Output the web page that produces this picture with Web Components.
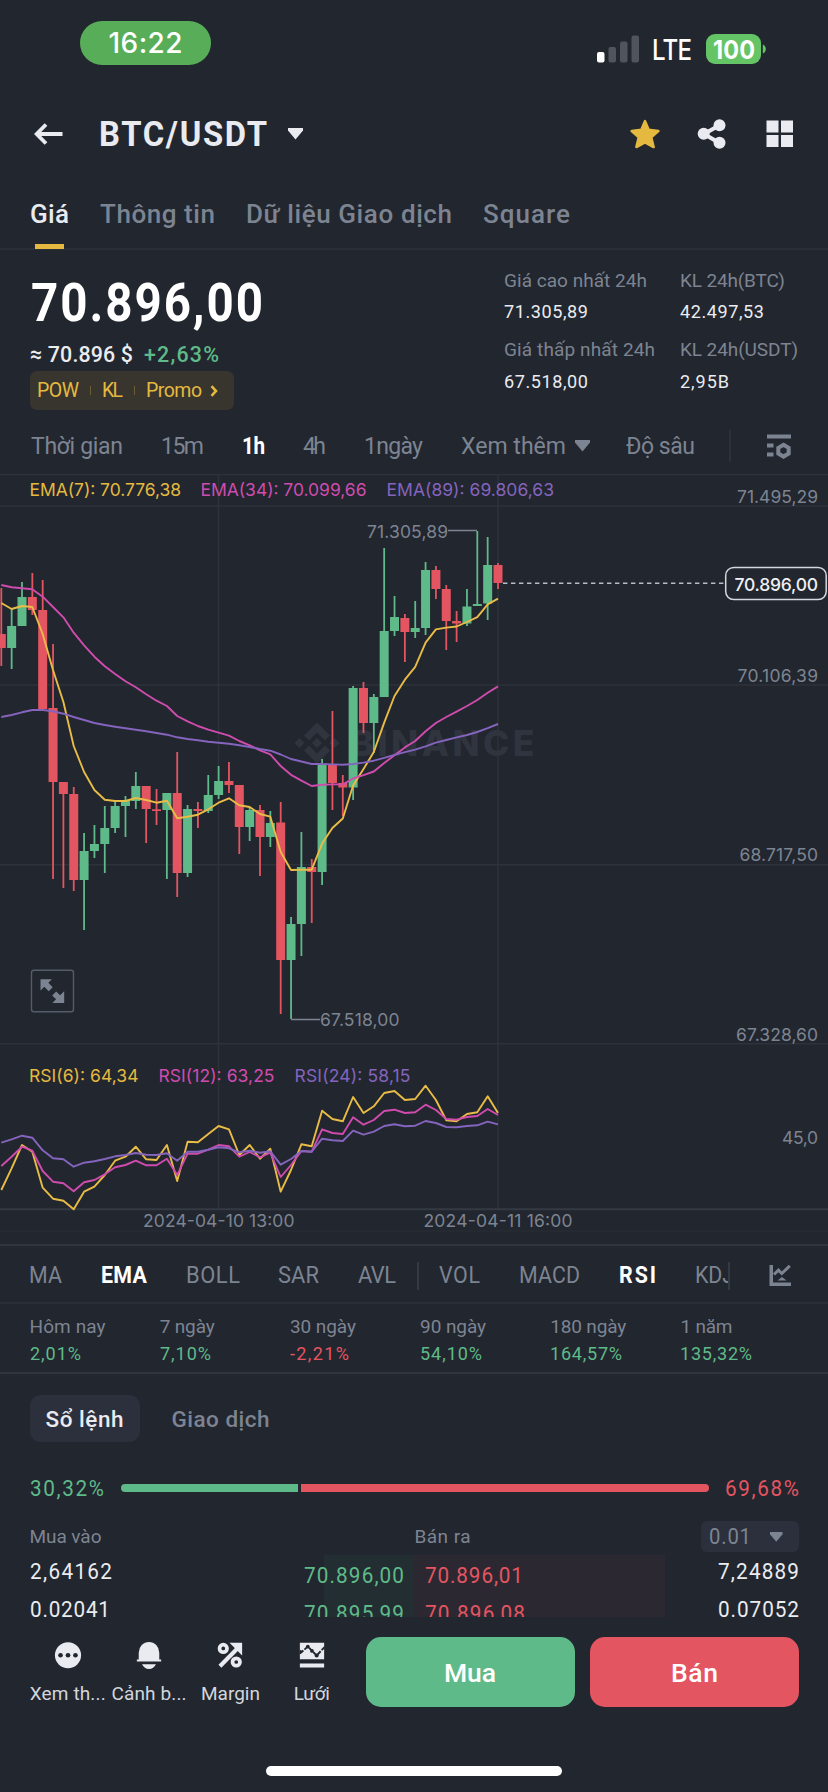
<!DOCTYPE html>
<html lang="vi">
<head>
<meta charset="utf-8">
<title>BTC/USDT</title>
<style>
    body {
        margin: 0;
        background: #22262f;
        color: #eaecef;
        font-family: Roboto, "Noto Sans", sans-serif;
        --muted: #7d8491;
        --green: #5fba89;
        --red: #e35561;
        --yellow: #e5b93f;
        --chip: #2b303c;
        --icon: #e9ebf0;
    }
</style>
</head>
<body>
<trade-page></trade-page>
<script>
const CARET = '<svg width="15" height="12" viewBox="0 0 15 12"><path d="M0 0h15v2.6L7.5 11.6 0 2.6z" fill="currentColor"/></svg>';

class TradePage extends HTMLElement {
    constructor() {
        super();
        this.attachShadow({ mode: 'open' });
        this.shadowRoot.innerHTML = `
            <style>
                :host { display: flex; flex-direction: column; width: 828px; height: 1792px; overflow: hidden; }
            </style>
            <status-bar></status-bar>
            <pair-header></pair-header>
            <page-tabs></page-tabs>
            <price-summary></price-summary>
            <interval-bar></interval-bar>
            <price-chart></price-chart>
            <indicator-bar></indicator-bar>
            <period-returns></period-returns>
            <order-book></order-book>
            <action-bar></action-bar>
        `;
    }
}

class StatusBar extends HTMLElement {
    constructor() {
        super();
        this.attachShadow({ mode: 'open' });
        this.shadowRoot.innerHTML = `
            <style>
                :host {
                    display: flex;
                    justify-content: space-between;
                    align-items: flex-start;
                    box-sizing: border-box;
                    height: 88px;
                    padding: 21px 62px 0 80px;
                    font-family: Inter, sans-serif;
                    color: #fff;
                }
                .clock {
                    display: flex;
                    align-items: center;
                    justify-content: center;
                    width: 131px;
                    height: 44px;
                    border-radius: 22px;
                    background: #58ae58;
                    font-size: 28px;
                    font-weight: 500;
                }
                .right { display: flex; align-items: center; margin-top: 12px; height: 32px; }
                .lte { font-size: 28px; font-weight: 500; margin: 2px 14px 0 13px; }
                .battery {
                    display: flex;
                    align-items: center;
                    justify-content: center;
                    width: 55px;
                    height: 30px;
                    border-radius: 9px;
                    background: #65c466;
                    font-size: 26px;
                    font-weight: 700;
                }
            </style>
            <div class="clock"><fit-text w="74">16:22</fit-text></div>
            <div class="right">
                <svg width="42" height="28" viewBox="0 0 42 28">
                    <rect x="0" y="17" width="7.5" height="10.5" rx="2" fill="#fff"/>
                    <rect x="11.5" y="12" width="7.5" height="15.5" rx="2" fill="#50545c"/>
                    <rect x="23" y="6.5" width="7.5" height="21" rx="2" fill="#50545c"/>
                    <rect x="34.5" y="0.5" width="7.5" height="27" rx="2" fill="#50545c"/>
                </svg>
                <fit-text class="lte" w="40" scale="0.86">LTE</fit-text>
                <div class="battery"><fit-text w="42" scale="0.9">100</fit-text></div>
                <svg width="5" height="10" viewBox="0 0 5 10"><path d="M1.800.500q3 1.500 3 4.500t-3 4.500z" fill="#65c466"/></svg>
            </div>
        `;
    }
}

class PairHeader extends HTMLElement {
    constructor() {
        super();
        this.attachShadow({ mode: 'open' });
        this.shadowRoot.innerHTML = `
            <style>
                :host {
                    display: flex;
                    align-items: center;
                    height: 92px;
                    padding: 0 34px;
                    color: var(--icon);
                }
                .pair { font-size: 34.5px; font-weight: 700; margin: 0 21px 0 36px; }
                .tools { display: flex; align-items: center; gap: 37px; margin-left: auto; }
                svg { display: block; }
            </style>
            <svg width="29" height="22" viewBox="0 0 29 22" fill="none" stroke="currentColor" stroke-width="3.8">
                <path d="M28.500 11H3M12 1.500 2.700 11l9.300 9.500"/>
            </svg>
            <fit-text class="pair" w="168" scale="0.95">BTC/USDT</fit-text>
            ${CARET}
            <div class="tools">
                <svg width="30" height="30" viewBox="0 0 30 30">
                    <path d="M15 2.200 18.600 10.800 28.300 12 21.200 18.200 23.600 28 15 23.400 6.400 28 8.800 18.200 1.700 12 11.400 10.800z" fill="#e5b93f" stroke="#e5b93f" stroke-width="2.6" stroke-linejoin="round"/>
                </svg>
                <svg width="29" height="30" viewBox="0 0 29 30" fill="currentColor">
                    <path d="M7 15 22.500 6.300M7 15l15.500 9" stroke="currentColor" stroke-width="4"/>
                    <circle cx="6.700" cy="14.800" r="6"/><circle cx="22.500" cy="6.300" r="6"/><circle cx="22.500" cy="23.800" r="6"/>
                </svg>
                <svg width="28" height="28" viewBox="0 0 28 28" fill="currentColor" style="margin-left:3px">
                    <path d="M.500.500h12v12H.500zM15 .500h12v12H15zM.500 15h12v12H.500zM15 15h12v12H15z"/>
                </svg>
            </div>
        `;
    }
}

class PageTabs extends HTMLElement {
    constructor() {
        super();
        this.attachShadow({ mode: 'open' });
        this.shadowRoot.innerHTML = `
            <style>
                :host {
                    display: flex;
                    gap: 31px;
                    box-sizing: border-box;
                    height: 70px;
                    padding-left: 30px;
                    border-bottom: 2px solid #292e37;
                    color: var(--muted);
                    font-size: 26px;
                    font-weight: 500;
                }
                .tab { display: flex; flex-direction: column; align-items: center; line-height: 68px; height: 69px; }
                .active { color: var(--icon); }
                .active::after { content: ''; width: 29px; height: 5px; margin-top: -4px; background: var(--yellow); }
            </style>
            <div class="tab active"><fit-text w="39">Giá</fit-text></div>
            <div class="tab"><fit-text w="115">Thông tin</fit-text></div>
            <div class="tab"><fit-text w="206">Dữ liệu Giao dịch</fit-text></div>
            <div class="tab"><fit-text w="87">Square</fit-text></div>
        `;
    }
}

class PriceSummary extends HTMLElement {
    constructor() {
        super();
        this.attachShadow({ mode: 'open' });
        this.shadowRoot.innerHTML = `
            <style>
                :host {
                    display: flex;
                    justify-content: space-between;
                    box-sizing: border-box;
                    height: 168px;
                    padding: 14px 29px 0 30px;
                }
                .price { font-size: 54px; font-weight: 700; line-height: 78px; margin-left: 1px; color: #fff; }
                .change { display: flex; gap: 11px; font-size: 22.5px; font-weight: 500; line-height: 24px; }
                .up { color: var(--green); }
                .tags {
                    display: inline-flex;
                    align-items: center;
                    box-sizing: border-box;
                    width: 204px;
                    height: 39px;
                    margin-top: 5px;
                    padding-left: 7px;
                    border-radius: 7px;
                    background: #37352e;
                    color: var(--yellow);
                    font-size: 19.5px;
                }
                .tags i { width: 1px; height: 9px; margin: 0 11px; background: #6d5d35; }
                .stats { display: grid; grid-template-columns: 176px 119px; grid-template-rows: 31px 38px 32px 31px; font-size: 19px; }
                .stats > * { line-height: 33px; }
                .label { color: var(--muted); }
            </style>
            <div>
                <fit-text class="price" w="232" scale="0.88">70.896,00</fit-text>
                <div class="change"><fit-text w="103" scale="0.95">≈ 70.896 $</fit-text><fit-text class="up" w="75" scale="0.95">+2,63%</fit-text></div>
                <div class="tags">
                    <fit-text w="42">POW</fit-text><i></i>
                    <fit-text w="21">KL</fit-text><i></i>
                    <fit-text w="56">Promo</fit-text>
                    <svg width="8" height="12" viewBox="0 0 8 12" style="margin-left:8px"><path d="M1.500 1.200 6 6l-4.500 4.800" fill="none" stroke="currentColor" stroke-width="2.6"/></svg>
                </div>
            </div>
            <div class="stats">
                <fit-text class="label" w="143">Giá cao nhất 24h</fit-text><fit-text class="label" w="105">KL 24h(BTC)</fit-text>
                <fit-text w="84" scale="0.95">71.305,89</fit-text><fit-text w="84" scale="0.95">42.497,53</fit-text>
                <fit-text class="label" w="151">Giá thấp nhất 24h</fit-text><fit-text class="label" w="118">KL 24h(USDT)</fit-text>
                <fit-text w="84" scale="0.95">67.518,00</fit-text><fit-text w="49" scale="0.95">2,95B</fit-text>
            </div>
        `;
    }
}

class IntervalBar extends HTMLElement {
    constructor() {
        super();
        this.attachShadow({ mode: 'open' });
        this.shadowRoot.innerHTML = `
            <style>
                :host {
                    display: flex;
                    align-items: center;
                    gap: 38px;
                    height: 56px;
                    padding-left: 31px;
                    color: var(--muted);
                    font-size: 23px;
                }
                .active { color: #fff; font-weight: 700; }
                .more { display: flex; align-items: center; gap: 9px; margin-right: -2px; }
                i { width: 2px; height: 32px; margin: 0 -2px 0 -4px; background: #2b3039; }
            </style>
            <fit-text w="92">Thời gian</fit-text>
            <fit-text w="43">15m</fit-text>
            <fit-text class="active" w="23" scale="0.9">1h</fit-text>
            <fit-text w="23">4h</fit-text>
            <fit-text w="59">1ngày</fit-text>
            <span class="more"><fit-text w="105">Xem thêm</fit-text>${CARET}</span>
            <fit-text w="69">Độ sâu</fit-text>
            <i></i>
            <svg width="25" height="25" viewBox="0 0 25 25" fill="currentColor">
                <path d="M0 .500h24v4H0zM0 9.500h6.500v4H0zM0 18.500h6.500v4H0z"/>
                <path d="M16.500 10.800l5.200 3v5.800l-5.200 3-5.200-3v-5.800z" fill="none" stroke="currentColor" stroke-width="4"/>
            </svg>
        `;
    }
}

// [high, body top, body bottom, low, rising] in chart pixels
const CANDLES = [
    [588, 634, 648, 666, 0], [608, 626, 648, 669, 1], [582, 597, 626, 626, 1], [573, 597, 610, 615, 0],
    [580, 610, 709, 709, 0], [644, 708, 782, 879, 0], [782, 782, 794, 888, 0], [787, 794, 880, 891, 0],
    [833, 851, 880, 930, 1], [825, 844, 851, 858, 1], [806, 828, 844, 873, 1], [801, 806, 828, 833, 1],
    [796, 801, 806, 837, 1], [772, 786, 801, 809, 1], [786, 786, 809, 843, 0], [789, 809.3, 811, 825, 0],
    [793, 793, 810, 879, 1], [752, 793, 873, 897, 0], [805, 809, 873, 877, 1], [802, 809, 811, 828, 0],
    [775, 795, 811, 813, 1], [766, 781, 795, 799, 1], [762, 781, 785, 793, 0], [785, 785, 827, 854, 0],
    [807, 810, 827, 841, 1], [805, 810, 837, 876, 0], [811, 823, 837, 847, 1], [802, 822.5, 960, 1014, 0],
    [917, 924, 960, 1019, 1], [832, 867, 924, 956, 1], [859, 867, 872, 923, 0], [759, 765, 872, 885, 1],
    [711, 765, 783, 810, 0], [775, 783, 787.5, 816, 0], [686, 688, 787.5, 800, 1], [682, 688, 723, 733, 0],
    [694, 697, 723, 753, 1], [548, 631, 697, 697, 1], [596, 617, 631, 636, 1], [614, 618, 632, 662, 0],
    [601, 628, 632, 638, 1], [562, 570, 628, 635, 1], [566, 570, 589, 599, 0], [585, 589, 621, 650, 0],
    [611, 621, 623.5, 642, 0], [589, 606.5, 623.5, 626, 1], [531, 604, 606, 606, 1], [537, 565, 603.5, 620, 1],
    [563, 565, 583, 589, 0]
];

const LINES = [
    ['#e9bc46', [603, 609, 606, 607, 634, 670, 702, 746, 772, 790, 799.7, 801, 801, 798, 800, 802.7, 800.7, 818.3, 816.7, 814.7, 809.3, 802.7, 798.3, 805.3, 807, 814, 816.7, 852, 870, 869.7, 869.7, 843.6, 828, 818.5, 785.5, 769, 752, 722.6, 696, 679.7, 666.8, 642.7, 629.4, 627.6, 626.5, 622, 617.2, 604.3, 598.7]],
    ['#cf4cae', [585, 587.3, 588.3, 589.3, 596.7, 607, 617.3, 632.7, 645.3, 656.7, 666.3, 674, 681.3, 687.3, 694.3, 700.7, 706, 716, 721.3, 726, 729.7, 732.7, 735.7, 741, 745.3, 750.3, 754.3, 766, 774.8, 780.7, 786, 784.8, 784.4, 784.4, 778.5, 775.2, 771.5, 763, 755.2, 747.4, 741, 731.2, 723, 717, 711.6, 706, 700, 692.7, 686.4]],
    ['#8464bd', [717, 715, 712.3, 710, 710, 711.3, 713.7, 717, 720, 723, 725, 726.7, 728.3, 729.7, 731.3, 733, 734.7, 737.3, 739, 740.3, 741.7, 742.7, 743.7, 745.3, 747, 749, 750.7, 754.5, 759, 761.5, 764, 764, 764.4, 764.8, 764, 762.6, 760.7, 757.8, 754.8, 752.2, 749.7, 746.3, 742.6, 740, 737.4, 735, 732, 728.2, 724]],
    ['#e9bc46', [1190, 1168.3, 1145, 1151.7, 1187.7, 1198.7, 1200.7, 1209.3, 1191.7, 1186.7, 1175, 1160.7, 1156.7, 1146.7, 1159.3, 1160, 1145, 1181, 1141.7, 1142.3, 1134, 1126, 1129.3, 1155, 1145, 1158.7, 1148.7, 1191.7, 1170, 1144.3, 1146.3, 1110.7, 1119, 1121.3, 1097, 1113, 1106.3, 1093, 1091, 1100, 1099, 1085.7, 1100, 1120.3, 1121.3, 1114, 1112.3, 1096.3, 1113]],
    ['#cf4cae', [1166, 1156.7, 1146.7, 1150.7, 1171, 1181.7, 1183.3, 1191.3, 1182.3, 1180, 1174.3, 1167.3, 1165, 1160.7, 1165.3, 1165.3, 1158.7, 1175, 1153.7, 1153.7, 1149.7, 1145, 1146.3, 1156.7, 1152, 1157.3, 1152.7, 1177, 1165, 1151, 1151.7, 1129.3, 1133, 1134, 1117.3, 1124.7, 1120, 1111, 1109.7, 1113, 1112.3, 1104.7, 1110, 1119, 1119.7, 1117, 1116, 1109, 1115]],
    ['#8464bd', [1142.7, 1139.3, 1135.7, 1137.7, 1150.3, 1158.3, 1159.3, 1166.7, 1162.7, 1161.3, 1159, 1156.3, 1155, 1153, 1154.7, 1155, 1153.3, 1160.7, 1151.7, 1151.7, 1149.7, 1147.3, 1148.3, 1152.3, 1150.7, 1152.7, 1151.3, 1164.7, 1159, 1151, 1151.7, 1138.7, 1140.3, 1141, 1130.7, 1134.7, 1131.7, 1126, 1124.3, 1126.3, 1125.7, 1121, 1123, 1127, 1127.3, 1126, 1125.3, 1121.7, 1124.3]]
];

// [text, x, baseline, width, fill, weight]
const CHART_TEXTS = [
    ['EMA(7): 70.776,38', 29.5, 495.5, 151.5, '#e5b93f'],
    ['EMA(34): 70.099,66', 200.5, 495.5, 166, '#cf4cae'],
    ['EMA(89): 69.806,63', 386.5, 495.5, 167.5, '#8464bd'],
    ['RSI(6): 64,34', 29, 1082, 109.5, '#e5b93f'],
    ['RSI(12): 63,25', 158.5, 1082, 116, '#cf4cae'],
    ['RSI(24): 58,15', 294.5, 1082, 116, '#8464bd'],
    ['71.495,29', 737, 503, 81, '#7d8491'],
    ['70.106,39', 737.5, 682, 80.5, '#7d8491'],
    ['68.717,50', 739.5, 861, 78.5, '#7d8491'],
    ['67.328,60', 736, 1040.5, 82, '#7d8491'],
    ['45,0', 782, 1143.5, 36, '#7d8491'],
    ['71.305,89', 367, 537.5, 81, '#7d8491'],
    ['67.518,00', 320, 1026, 79.5, '#7d8491'],
    ['2024-04-10 13:00', 143, 1227, 151.5, '#7d8491'],
    ['2024-04-11 16:00', 423.5, 1227, 149, '#7d8491'],
    ['70.896,00', 734.5, 590.5, 83.5, '#eef0f4', 500]
];

class PriceChart extends HTMLElement {
    constructor() {
        super();
        this.attachShadow({ mode: 'open' });
        const x = i => 1.3 + i * 10.348;
        const candles = CANDLES.map(([h, t, b, l, up], i) => {
            const c = up ? '#5fba89' : '#e35561';
            return `<rect x="${x(i) - 0.9}" y="${h}" width="1.8" height="${l - h}" fill="${c}"/>
                <rect x="${x(i) - 4.5}" y="${t}" width="9" height="${b - t}" fill="${c}"/>`;
        }).join('');
        const lines = LINES.map(([c, ys]) =>
            `<polyline points="${ys.map((y, i) => x(i).toFixed(1) + ',' + y).join(' ')}" fill="none" stroke="${c}" stroke-width="1.9" stroke-linejoin="round"/>`
        ).join('');
        const texts = CHART_TEXTS.map(([s, tx, ty, w, c, weight]) =>
            `<text x="${tx}" y="${ty}" textLength="${w}" fill="${c}" font-weight="${weight || 400}">${s}</text>`
        ).join('');
        this.shadowRoot.innerHTML = `
            <style>
                :host { display: block; height: 770px; }
                svg { display: block; font-family: Inter, sans-serif; font-size: 17.5px; }
            </style>
            <svg width="828" height="770" viewBox="0 474 828 770">
                <path d="M0 474.500H828M0 506H828M0 685H828M0 864.700H828M0 1043.800H828M218.500 474V1209M498 474V1209" stroke="#2d323b" stroke-width="1.5"/>
                <path d="M0 1209.300H828" stroke="#343a43" stroke-width="2"/>
                <path d="M0 1231H828" stroke="#282c35"/>
                <g fill="#2f343e">
                    <path d="M304 735.500 317 722.500l13 13-5 5-8-8-8 8zM304 750.500l5-5 8 8 8-8 5 5-13 13zM312 743l5-5 5 5-5 5zM294.500 743l5-5 5 5-5 5zM329.500 743l5-5 5 5-5 5z"/>
                    <text x="350.5" y="755.5" textLength="184" font-size="35.5" font-weight="800">BINANCE</text>
                </g>
                ${candles}
                ${lines}
                <path d="M448 530.500h29M291 1019.500h29" stroke="#7d8491" stroke-width="1.4"/>
                <path d="M503 583.300H724" stroke="#b9bdc5" stroke-width="1.5" stroke-dasharray="4.4 3.6"/>
                <rect x="725.7" y="567.5" width="100.5" height="32" rx="8" fill="#22262f" stroke="#d5d8de" stroke-width="1.5"/>
                ${texts}
                <rect x="31.5" y="970.3" width="42" height="41.5" rx="2.5" fill="none" stroke="#555c69" stroke-width="1.4"/>
                <path d="M40.500 979.200h11.400l-3.600 3.600 4.400 4.400-4 4-4.400-4.400-3.800 3.800zM64.200 1003h-11.800l3.700-3.700-3.900-3.900 4-4 3.900 3.900 4.100-4.100z" fill="#7d8491"/>
            </svg>
        `;
    }
}

class IndicatorBar extends HTMLElement {
    constructor() {
        super();
        this.attachShadow({ mode: 'open' });
        this.shadowRoot.innerHTML = `
            <style>
                :host {
                    display: flex;
                    align-items: center;
                    box-sizing: border-box;
                    height: 60px;
                    padding: 3px 36px 0 29px;
                    border-top: 2px solid #2f343d;
                    border-bottom: 2px solid #292e37;
                    color: var(--muted);
                    font-size: 23px;
                }
                .group { display: flex; gap: 38.8px; }
                .sub { width: 289px; overflow: hidden; gap: 39px; }
                .sub > * { flex: none; }
                .active { color: #fff; font-weight: 700; }
                i { width: 2px; height: 28px; background: #343a44; }
                i.mid { margin: 0 20px 0 21px; }
                svg { margin-left: auto; }
            </style>
            <div class="group">
                <fit-text w="33" scale="0.93">MA</fit-text>
                <fit-text class="active" w="46" scale="0.93">EMA</fit-text>
                <fit-text w="54" scale="0.95">BOLL</fit-text>
                <fit-text w="41" scale="0.95">SAR</fit-text>
                <fit-text w="38" scale="0.95">AVL</fit-text>
            </div>
            <i class="mid"></i>
            <div class="group sub">
                <fit-text w="41" scale="0.93">VOL</fit-text>
                <fit-text w="61" scale="0.93">MACD</fit-text>
                <fit-text class="active" w="37" scale="0.93">RSI</fit-text>
                <fit-text w="39" scale="0.93">KDJ</fit-text>
            </div>
            <i></i>
            <svg width="23" height="22" viewBox="0 0 23 22" fill="currentColor">
                <path d="M.500 0h3.500v17.500H22V21H.500z"/>
                <path d="M5 9.500 9.500 5.200l3.300 3.300L20.800.800" fill="none" stroke="currentColor" stroke-width="3"/>
                <path d="M8.500 15.500l4.500-3.600 4.500 3.600z"/>
            </svg>
        `;
    }
}

class PeriodReturns extends HTMLElement {
    constructor() {
        super();
        this.attachShadow({ mode: 'open' });
        this.shadowRoot.innerHTML = `
            <style>
                :host {
                    display: grid;
                    grid-template-columns: repeat(6, 130.2px);
                    box-sizing: border-box;
                    height: 70px;
                    padding: 9px 0 0 29.5px;
                    border-bottom: 2px solid #2f343d;
                    font-size: 19px;
                    line-height: 27px;
                }
                .col { display: flex; flex-direction: column; }
                .label { color: var(--muted); }
                .up { color: var(--green); }
                .down { color: var(--red); }
            </style>
            <div class="col"><fit-text class="label" w="76">Hôm nay</fit-text><fit-text class="up" w="51" scale="0.95">2,01%</fit-text></div>
            <div class="col"><fit-text class="label" w="55">7 ngày</fit-text><fit-text class="up" w="51" scale="0.95">7,10%</fit-text></div>
            <div class="col"><fit-text class="label" w="66">30 ngày</fit-text><fit-text class="down" w="59" scale="0.95">-2,21%</fit-text></div>
            <div class="col"><fit-text class="label" w="66">90 ngày</fit-text><fit-text class="up" w="62" scale="0.95">54,10%</fit-text></div>
            <div class="col"><fit-text class="label" w="76">180 ngày</fit-text><fit-text class="up" w="72" scale="0.95">164,57%</fit-text></div>
            <div class="col"><fit-text class="label" w="52">1 năm</fit-text><fit-text class="up" w="72" scale="0.95">135,32%</fit-text></div>
        `;
    }
}

class OrderBook extends HTMLElement {
    constructor() {
        super();
        this.attachShadow({ mode: 'open' });
        this.shadowRoot.innerHTML = `
            <style>
                :host { display: block; box-sizing: border-box; height: 243px; padding: 21px 29.5px 0; overflow: hidden; font-size: 22.5px; }
                .tabs { display: flex; align-items: center; gap: 32px; height: 47px; font-weight: 500; color: var(--muted); }
                .active {
                    display: flex;
                    align-items: center;
                    justify-content: center;
                    width: 110px;
                    height: 47px;
                    border-radius: 11px;
                    background: var(--chip);
                    color: var(--icon);
                }
                .ratio { display: flex; align-items: center; gap: 17.5px; height: 28px; margin-top: 32px; }
                .bar { flex: 1; display: flex; gap: 3px; height: 7.5px; margin-right: -2px; }
                .bar b { width: 177px; background: var(--green); border-radius: 4px 0 0 4px; }
                .bar b + b { flex: 1; background: var(--red); border-radius: 0 4px 4px 0; }
                .up { color: var(--green); }
                .down { color: var(--red); }
                .head {
                    display: grid;
                    grid-template-columns: 385px 1fr 98px;
                    align-items: center;
                    height: 31px;
                    margin-top: 19px;
                    font-size: 19px;
                    color: var(--muted);
                }
                .select {
                    display: flex;
                    align-items: center;
                    justify-content: space-between;
                    box-sizing: border-box;
                    height: 31px;
                    padding: 0 16px 0 8px;
                    border-radius: 6px;
                    background: var(--chip);
                    font-size: 22px;
                }
                .select svg { width: 12.5px; height: 10px; }
                .rows { margin-top: 3px; }
                .row { display: grid; grid-template-columns: 384px 385px; height: 38.4px; }
                .side { display: flex; justify-content: space-between; line-height: 33px; }
                .side .up, .side .down { line-height: 40px; }
                .bid { background: linear-gradient(#232e33, #232e33) 100% 0 / 90px 100% no-repeat; }
                .bid .up { margin-right: 10px; }
                .ask { background: linear-gradient(#2c2831, #2c2831) 0 0 / 251px 100% no-repeat; padding-left: 11px; }
            </style>
            <div class="tabs">
                <span class="active"><fit-text w="78">Sổ lệnh</fit-text></span>
                <fit-text w="98">Giao dịch</fit-text>
            </div>
            <div class="ratio">
                <fit-text class="up" w="74" scale="0.92">30,32%</fit-text>
                <span class="bar"><b></b><b></b></span>
                <fit-text class="down" w="74" scale="0.92">69,68%</fit-text>
            </div>
            <div class="head">
                <fit-text w="72">Mua vào</fit-text>
                <fit-text w="56">Bán ra</fit-text>
                <span class="select"><fit-text w="42" scale="0.92">0.01</fit-text>${CARET}</span>
            </div>
            <div class="rows">
                <div class="row">
                    <div class="side bid"><fit-text w="82" scale="0.92">2,64162</fit-text><fit-text class="up" w="100" scale="0.92">70.896,00</fit-text></div>
                    <div class="side ask"><fit-text class="down" w="98" scale="0.92">70.896,01</fit-text><fit-text w="81" scale="0.92">7,24889</fit-text></div>
                </div>
                <div class="row">
                    <div class="side bid"><fit-text w="80" scale="0.92">0.02041</fit-text><fit-text class="up" w="100" scale="0.92">70.895,99</fit-text></div>
                    <div class="side ask"><fit-text class="down" w="100" scale="0.92">70.896,08</fit-text><fit-text w="81" scale="0.92">0.07052</fit-text></div>
                </div>
            </div>
        `;
    }
}

class ActionBar extends HTMLElement {
    constructor() {
        super();
        this.attachShadow({ mode: 'open' });
        this.shadowRoot.innerHTML = `
            <style>
                :host { display: flex; flex-direction: column; align-items: center; height: 175px; flex: none; }
                .row { display: flex; align-self: stretch; padding: 20px 29px 0 27px; height: 70px; }
                .item { display: flex; flex-direction: column; align-items: center; width: 81.4px; padding-top: 4px; box-sizing: border-box; font-size: 19px; color: #d3d6dc; }
                .item svg { display: block; margin-bottom: 12px; color: var(--icon); }
                .item fit-text { line-height: 26px; }
                .btn {
                    display: flex;
                    align-items: center;
                    justify-content: center;
                    width: 209px;
                    height: 70px;
                    border-radius: 15px;
                    color: #fff;
                    font-size: 26.5px;
                    font-weight: 500;
                    background: var(--green);
                    margin-left: 13px;
                }
                .sell { background: var(--red); margin-left: 15.5px; }
                .home { width: 296px; height: 10px; border-radius: 5px; background: #fff; margin-top: 59px; }
            </style>
            <div class="row">
                <div class="item">
                    <svg width="30" height="30" viewBox="0 0 30 30"><circle cx="15" cy="15.3" r="14" fill="currentColor"/><g fill="#22262f"><circle cx="7" cy="15.3" r="2.5"/><circle cx="15" cy="15.3" r="2.5"/><circle cx="23" cy="15.3" r="2.5"/></g></svg>
                    <fit-text w="76">Xem th...</fit-text>
                </div>
                <div class="item">
                    <svg width="30" height="30" viewBox="0 0 30 30" fill="currentColor"><path d="M4 12.500a11 11.500 0 0 1 22 0v7.300l2 0V22H2v-2.200h2zM7.500 25h15q-2.500 5-7.500 5t-7.500-5z"/></svg>
                    <fit-text w="75">Cảnh b...</fit-text>
                </div>
                <div class="item">
                    <svg width="30" height="30" viewBox="0 0 30 30" fill="none" stroke="currentColor"><circle cx="7.8" cy="8" r="4" stroke-width="4"/><circle cx="21.7" cy="22.5" r="4" stroke-width="4"/><path d="M4.200 27 24 7" stroke-width="4.4"/><path d="M14.500 2H28v13.500z" fill="currentColor" stroke="none"/></svg>
                    <fit-text w="59">Margin</fit-text>
                </div>
                <div class="item">
                    <svg width="30" height="30" viewBox="0 0 30 30"><path d="M2 2h26v17.500H2zM2 24h26v4.500H2z" fill="currentColor"/><path d="M2 13.500 10.500 6l9.500 9.500 8.500-9" fill="none" stroke="#22262f" stroke-width="2" stroke-dasharray="5 1.5"/><g fill="#22262f"><circle cx="10.5" cy="6" r="2"/><circle cx="15" cy="10.7" r="2"/><circle cx="20" cy="15.6" r="2.2"/><path d="M2 9.500l3.500 1.500L2 14z"/></g></svg>
                    <fit-text w="36">Lưới</fit-text>
                </div>
                <div class="btn"><fit-text w="52">Mua</fit-text></div>
                <div class="btn sell"><fit-text w="47">Bán</fit-text></div>
            </div>
            <div class="home"></div>
        `;
    }
}

// Single line of text tracked to fill the width given in "w";
// "scale" condenses the glyphs before the tracking is worked out
class FitText extends HTMLElement {
    constructor() {
        super();
        this.attachShadow({ mode: 'open' });
        this.shadowRoot.innerHTML = `
            <style>
                :host { display: block; flex: none; white-space: nowrap; }
                span { display: inline-block; transform-origin: 0 50%; }
            </style>
            <span><slot></slot></span>
        `;
    }

    connectedCallback() {
        const w = Number(this.getAttribute('w'));
        const scale = Number(this.getAttribute('scale') || 1);
        const span = this.shadowRoot.querySelector('span');
        const gap = (w / scale - span.getBoundingClientRect().width) / (this.textContent.length - 1);
        this.style.width = w + 'px';
        span.style.letterSpacing = gap + 'px';
        if (scale !== 1) span.style.transform = `scaleX(${scale})`;
    }
}

customElements.define('trade-page', TradePage);
customElements.define('status-bar', StatusBar);
customElements.define('pair-header', PairHeader);
customElements.define('page-tabs', PageTabs);
customElements.define('price-summary', PriceSummary);
customElements.define('interval-bar', IntervalBar);
customElements.define('price-chart', PriceChart);
customElements.define('indicator-bar', IndicatorBar);
customElements.define('period-returns', PeriodReturns);
customElements.define('order-book', OrderBook);
customElements.define('action-bar', ActionBar);
customElements.define('fit-text', FitText);
</script>
</body>
</html>
